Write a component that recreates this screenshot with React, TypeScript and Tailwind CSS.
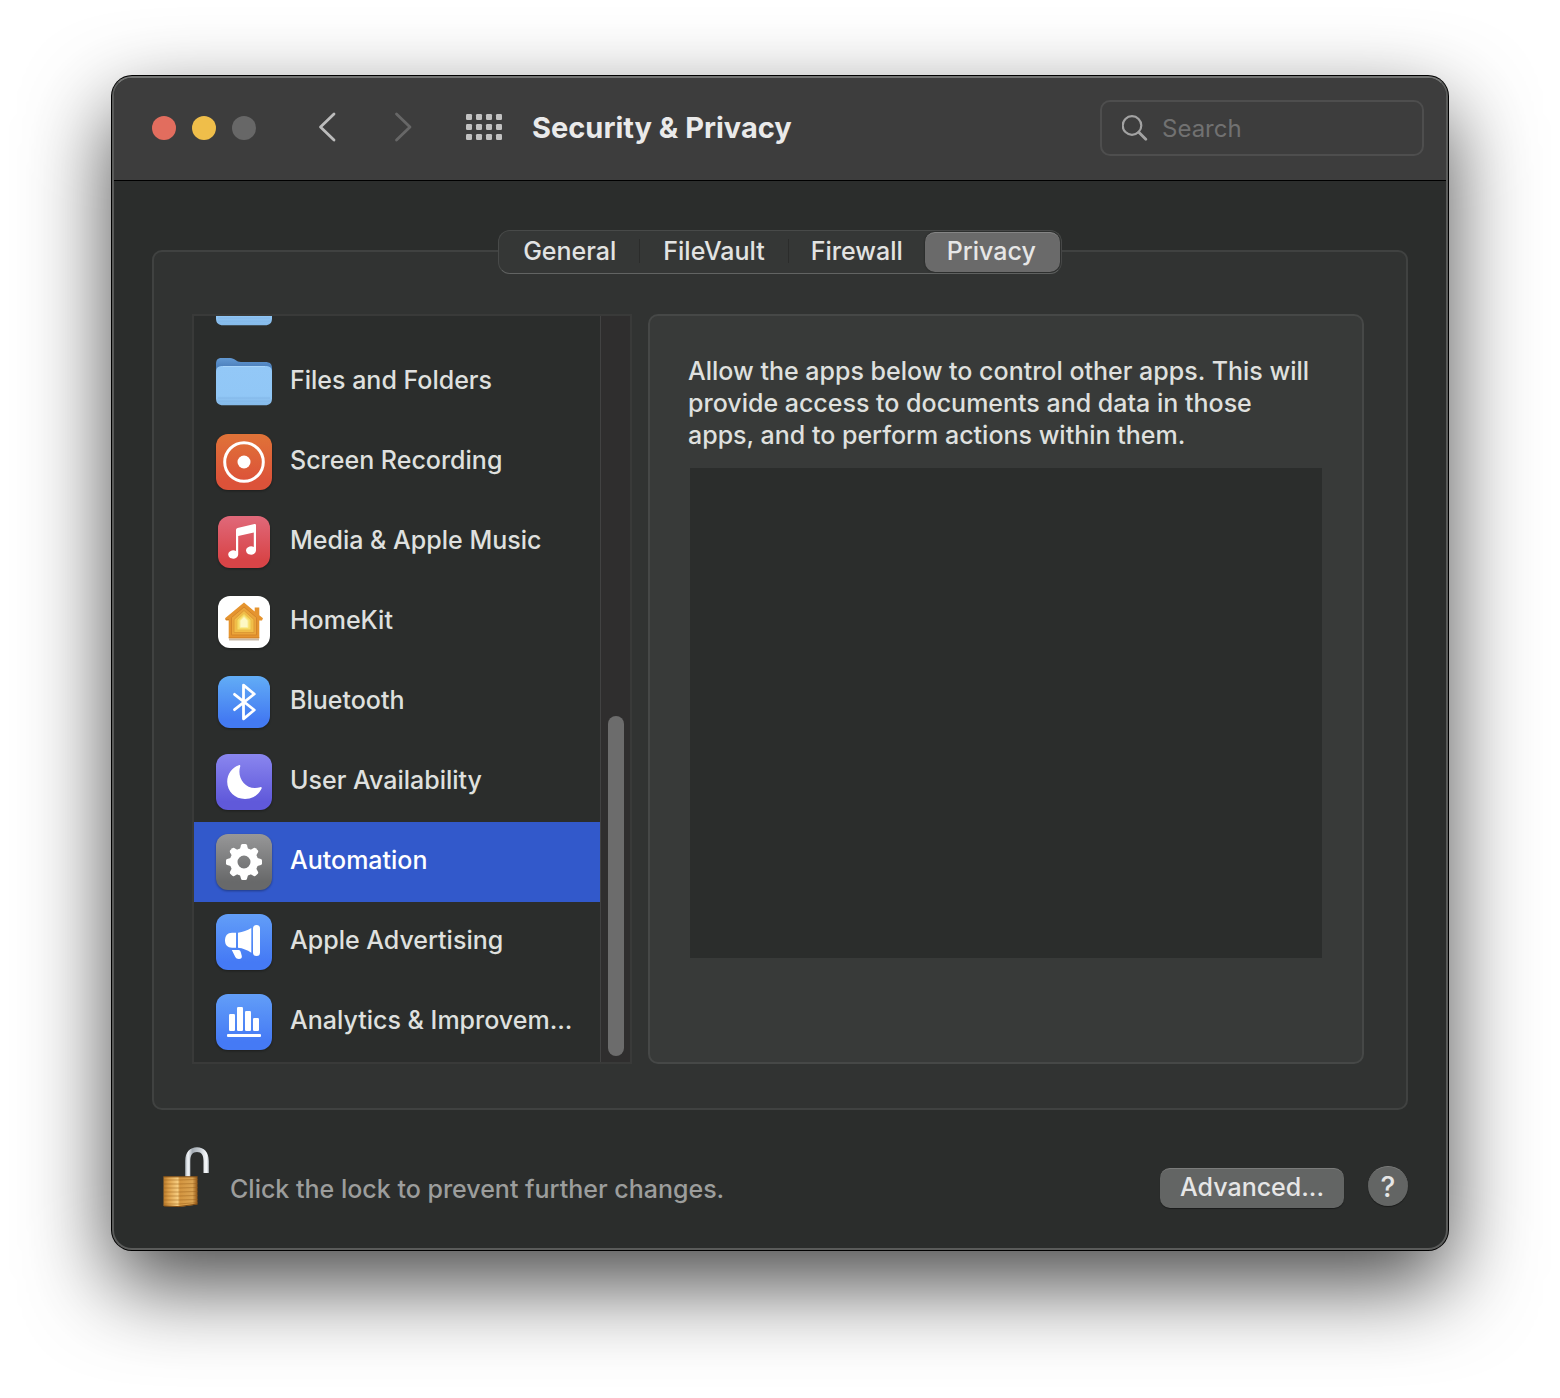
import { type ReactNode, useState } from "react";

type Item = {
  label: string;
  icon: ReactNode;
};

const tabs = ["General", "FileVault", "Firewall", "Privacy"];

function Tile({
  id,
  from,
  to,
  inset = 0,
  children,
}: {
  id: string;
  from: string;
  to: string;
  inset?: number;
  children: ReactNode;
}) {
  return (
    <svg
      viewBox="0 0 56 56"
      className="size-14 shrink-0 overflow-visible drop-shadow-[0_1px_1px_rgba(0,0,0,0.35)]"
      aria-hidden="true"
    >
      <defs>
        <linearGradient id={id} x1="0" y1="0" x2="0" y2="1">
          <stop offset="0" stopColor={from} />
          <stop offset="0.85" stopColor={to} />
        </linearGradient>
      </defs>
      <rect
        x={inset}
        y={inset}
        width={56 - inset * 2}
        height={56 - inset * 2}
        rx="12"
        fill={`url(#${id})`}
      />
      {children}
    </svg>
  );
}

function FolderIcon() {
  return (
    <svg viewBox="0 0 56 56" className="size-14 shrink-0" aria-hidden="true">
      <defs>
        <linearGradient id="folder-back" x1="0" y1="0" x2="0" y2="1">
          <stop offset="0" stopColor="#6399d3" />
          <stop offset="0.3" stopColor="#4f83bf" />
        </linearGradient>
        <linearGradient id="folder-front" x1="0" y1="0" x2="0" y2="1">
          <stop offset="0" stopColor="#93c8f7" />
          <stop offset="0.75" stopColor="#91c7f6" />
          <stop offset="1" stopColor="#84b8e8" />
        </linearGradient>
      </defs>
      <path
        d="M0 10C0 5.500 2 4 6 4H14C19 4 20 8 25 8H49C54 8 56 10 56 14V30H0Z"
        fill="url(#folder-back)"
      />
      <path
        d="M0 18C0 13.500 2.500 12 7 12H49C53.500 12 56 13.500 56 18V44.500C56 49 53.500 51.300 49 51.300H7C2.500 51.300 0 49 0 44.500Z"
        fill="url(#folder-front)"
      />
      <path d="M7 12.500H49" stroke="#a8d5fb" />
      <path d="M2 44H54M2 47H54" stroke="#7fb3e2" strokeOpacity="0.6" />
    </svg>
  );
}

const items: Item[] = [
  { label: "Files and Folders", icon: <FolderIcon /> },
  {
    label: "Screen Recording",
    icon: (
      <Tile id="screen" from="#e07338" to="#dc5239">
        <circle cx="28" cy="28" r="19.3" fill="none" stroke="#fff" strokeWidth="3" />
        <circle cx="28" cy="28" r="6.5" fill="#fff" />
      </Tile>
    ),
  },
  {
    label: "Media & Apple Music",
    icon: (
      <Tile id="music" from="#e0697a" to="#d84447" inset={2}>
        <path
          d="M20 15.800Q20 14.200 21.500 13.900L38.500 10Q40 9.700 40 11.200V36.500A5 4.200 0 1 1 37.800 33V18.500L22.200 22V40.500A5 4.200 0 1 1 20 37Z"
          fill="#fff"
        />
      </Tile>
    ),
  },
  {
    label: "HomeKit",
    icon: (
      <Tile id="home" from="#ffffff" to="#ffffff" inset={2}>
        <path d="M13 45.500H43" stroke="#c9b8a4" strokeWidth="2" />
        <path
          d="M28 8.600L38.700 17.500V13.500H43.300V21.300L47 24.300L46 26.500H43.300V44.300H12.700V26.500H10L9 24.300Z"
          fill="#e5942f"
        />
        <path
          d="M12.700 43.800H43.300M9.500 25.500H13"
          stroke="#c77724"
          fill="none"
          strokeOpacity="0.7"
        />
        <g strokeLinejoin="round">
          <path d="M28 13L40.500 23.500V41H15.500V23.500Z" fill="#eba53a" stroke="#d4852a" />
          <path d="M28 16.500L38 25.500V38.500H18V25.500Z" fill="#f2bd48" stroke="#dd9a35" />
          <path d="M28 19.500L35 26V36H21V26Z" fill="#f7dc66" stroke="#e9bd4b" />
          <path d="M28 22.500L32 26.500V33.500H24V26.500Z" fill="#fdf8c4" stroke="#f9ec96" />
        </g>
      </Tile>
    ),
  },
  {
    label: "Bluetooth",
    icon: (
      <Tile id="bluetooth" from="#62adf6" to="#437af2" inset={2}>
        <path
          d="M18.500 20.300L38.300 36L27.500 44.800V11.200L38.300 20L18.500 35.700"
          fill="none"
          stroke="#fff"
          strokeWidth="2.8"
          strokeLinecap="round"
          strokeLinejoin="round"
        />
      </Tile>
    ),
  },
  {
    label: "User Availability",
    icon: (
      <Tile id="moon" from="#8a86ef" to="#6059da">
        <path
          d="M22.800 11.200C24 10.800 24.600 11.500 24.200 12.600C20.500 24 30 37.500 44.300 33.200C45.500 32.900 46 33.500 45.600 34.500C42.500 41 36.500 45 29 45C19 45 11.200 37.500 11.200 27.800C11.200 20 16 13.500 22.800 11.200Z"
          fill="#fff"
        />
      </Tile>
    ),
  },
  {
    label: "Automation",
    icon: (
      <Tile id="gear" from="#979798" to="#68696a">
        <circle cx="28" cy="28" r="10.3" fill="none" stroke="#fff" strokeWidth="7.6" />
        {[0, 45, 90, 135, 180, 225, 270, 315].map((angle) => (
          <path
            key={angle}
            d="M23.800 15.500L25 11.200Q25.400 10 26.500 10H29.500Q30.600 10 31 11.200L32.200 15.500Z"
            transform={`rotate(${angle} 28 28)`}
            fill="#fff"
          />
        ))}
      </Tile>
    ),
  },
  {
    label: "Apple Advertising",
    icon: (
      <Tile id="ads" from="#629ef8" to="#457af5">
        <g fill="#fff">
          <path d="M16 18.700H20V33.800H16C11.500 33.800 9 31 9 26.300S11.500 18.700 16 18.700Z" />
          <path d="M22 18.700C27 18.200 31 16.500 35.300 14V38.700C31 36 27 34.300 22 33.800Z" />
          <rect x="37" y="11" width="7" height="31" rx="3.5" />
          <path d="M15.800 36H22.500C24 36 24.500 37 25 39L25.800 42C26.200 44 25 45 23 45C21 45 20 44.300 19.300 43Z" />
        </g>
      </Tile>
    ),
  },
  {
    label: "Analytics & Improvem...",
    icon: (
      <Tile id="analytics" from="#629ef8" to="#457af5">
        <g fill="#fff">
          <rect x="13" y="20" width="6" height="17" rx="1.2" />
          <rect x="21" y="13" width="6" height="24" rx="1.2" />
          <rect x="29" y="17" width="6" height="20" rx="1.2" />
          <rect x="37" y="24" width="6" height="13" rx="1.2" />
          <rect x="11" y="40" width="34" height="3" rx="1" />
        </g>
      </Tile>
    ),
  },
];

function LockIcon() {
  return (
    <svg viewBox="0 0 48 62" className="h-[62px] w-12" aria-hidden="true">
      <defs>
        <linearGradient id="brass" x1="0" y1="0" x2="1" y2="0">
          <stop offset="0" stopColor="#b97a2b" />
          <stop offset="0.15" stopColor="#dda04a" />
          <stop offset="0.42" stopColor="#f6cd80" />
          <stop offset="0.48" stopColor="#d39540" />
          <stop offset="0.85" stopColor="#dba452" />
          <stop offset="1" stopColor="#8f5417" />
        </linearGradient>
        <linearGradient id="steel" x1="0" y1="0" x2="1" y2="0">
          <stop offset="0" stopColor="#aab2b9" />
          <stop offset="0.12" stopColor="#f4f7fa" />
          <stop offset="0.3" stopColor="#a3abb3" />
          <stop offset="0.6" stopColor="#c3c9cf" />
          <stop offset="0.9" stopColor="#f7f9fb" />
          <stop offset="1" stopColor="#bcc3c9" />
        </linearGradient>
      </defs>
      <path
        d="M23.200 31V15C23.200 6 28 1.200 35 1.200C42 1.200 46.800 6 46.800 15V27H41.500V15C41.500 9 39.500 6 35 6C30.500 6 28.300 9 28.300 15V31Z"
        fill="url(#steel)"
      />
      <path d="M1.500 30.500H35.500V58.500L17 61L1.500 60Z" fill="url(#brass)" />
      <path
        d="M2 34H17L35.500 33.500M2 38H17L35.500 37.500M2 42H17L35.500 41.500M2 46H17L35.500 45.500M2 50H17L35.500 49.500M2 54H17L35.500 53.500M2 58H17L35.500 56.500"
        stroke="#9a601c"
        strokeOpacity="0.5"
        fill="none"
      />
      <path d="M1.500 30.800H35.500M2 60L17 60.600L35.500 58" stroke="#7c4a14" fill="none" />
    </svg>
  );
}

function TitleBar() {
  return (
    <header className="flex h-[103px] items-center border-b border-black bg-[#3d3d3d] pr-[22px] pb-[2px] pl-[38px]">
      <div className="flex gap-4">
        <button type="button" aria-label="Close" className="size-6 rounded-full bg-[#e26d5e]" />
        <button type="button" aria-label="Minimize" className="size-6 rounded-full bg-[#efbe4a]" />
        <button type="button" aria-label="Zoom" disabled className="size-6 rounded-full bg-[#676767]" />
      </div>
      <nav className="ml-[61px] flex items-center gap-[54px] pb-[2px]">
        <button type="button" aria-label="Back">
          <svg
            viewBox="0 0 22 30"
            className="h-[30px] w-[22px]"
            fill="none"
            stroke="#bcbcbc"
            strokeWidth="2.8"
            strokeLinecap="round"
            strokeLinejoin="round"
          >
            <path d="M17 2L3.500 15L17 28" />
          </svg>
        </button>
        <button type="button" aria-label="Forward" disabled>
          <svg
            viewBox="0 0 22 30"
            className="h-[30px] w-[22px]"
            fill="none"
            stroke="#676767"
            strokeWidth="2.8"
            strokeLinecap="round"
            strokeLinejoin="round"
          >
            <path d="M3.500 2L17 15L3.500 28" />
          </svg>
        </button>
        <button type="button" aria-label="Show all" className="-ml-[3px]">
          <svg viewBox="0 0 36 26" className="h-[26px] w-9" fill="#c2c2c2">
            {[0, 10, 20].map((y) =>
              [0, 10, 20, 30].map((x) => (
                <rect key={`${x}-${y}`} x={x} y={y} width="6" height="6" rx="1.2" />
              )),
            )}
          </svg>
        </button>
      </nav>
      <h1 className="ml-[30px] text-[29px] font-bold text-[#eaeaea]">Security &amp; Privacy</h1>
      <label className="ml-auto flex h-14 w-[324px] items-center gap-[14px] rounded-[10px] border-2 border-[#4e4e4e] px-5">
        <svg
          viewBox="0 0 26 26"
          className="size-[26px] shrink-0"
          fill="none"
          stroke="#a3a3a3"
          strokeLinecap="round"
        >
          <circle cx="10" cy="10.5" r="9.3" strokeWidth="2.2" />
          <path d="M16.800 17.300L23.800 24.300" strokeWidth="2.800" />
        </svg>
        <input
          type="text"
          aria-label="Search"
          placeholder="Search"
          className="w-full min-w-0 bg-transparent pt-[2px] text-[24px] text-[#eaeaea] outline-none placeholder:text-[#717171]"
        />
      </label>
    </header>
  );
}

export default function App() {
  const [tab, setTab] = useState("Privacy");
  const [selected, setSelected] = useState("Automation");

  return (
    <div className="bg-white px-28 pt-[76px] pb-[148px] font-['Inter','Liberation_Sans',sans-serif]">
      <main className="overflow-hidden rounded-[20px] border-2 border-[#5a5b5a] border-t-[#737473] bg-[#2b2d2c] shadow-[0_0_0_1px_#000,0_34px_86px_rgba(0,0,0,0.72)]">
        <TitleBar />
        <div className="px-[38px] pt-[49px] pb-[40px]">
          <div className="relative z-10 flex justify-center">
            <div
              role="tablist"
              className="flex h-11 items-center rounded-[12px] border border-[#484a49] border-b-[#626463] bg-[#353736] p-px"
            >
              {tabs.map((name, i) => (
                <button
                  key={name}
                  type="button"
                  role="tab"
                  aria-selected={tab === name}
                  onClick={() => setTab(name)}
                  className={
                    tab === name
                      ? "flex h-10 items-center rounded-[10px] border-t border-[#858585] bg-[#6a6a6a] pr-6 pb-[3px] pl-[22px] text-[25px] leading-8 font-medium text-[#e6e6e6] shadow-[0_0_2px_rgba(0,0,0,0.5)]"
                      : "flex h-10 items-center pb-[2px] text-[25px] leading-8 font-medium text-[#e2e3e2]"
                  }
                >
                  <span
                    className={
                      tab === name
                        ? "leading-6"
                        : i < 2
                          ? "border-r border-[#2b2c2b] px-[23px] leading-6"
                          : "px-[22px] leading-6"
                    }
                  >
                    {name}
                  </span>
                </button>
              ))}
            </div>
          </div>

          <section className="-mt-6 flex gap-4 rounded-[10px] border-2 border-[#404241] bg-[#313332] pt-[62px] pr-[42px] pb-11 pl-[38px]">
            <div className="flex h-[750px] w-[440px] shrink-0 border-2 border-[#393a39] bg-[#2b2d2c]">
              <ul className="flex min-w-0 flex-1 flex-col justify-end overflow-hidden">
                <li aria-hidden="true" className="flex h-20 shrink-0 items-center pl-[22px]">
                  <FolderIcon />
                </li>
                {items.map((item) => (
                  <li key={item.label} className="shrink-0">
                    <button
                      type="button"
                      onClick={() => setSelected(item.label)}
                      className={
                        selected === item.label
                          ? "flex h-20 w-full items-center gap-[18px] bg-[#3259cb] pl-[22px] text-left text-white"
                          : "flex h-20 w-full items-center gap-[18px] pl-[22px] text-left text-[#dfe0df]"
                      }
                    >
                      {item.icon}
                      <span className="pb-1 text-[25px] leading-8 font-medium whitespace-nowrap">
                        {item.label}
                      </span>
                    </button>
                  </li>
                ))}
              </ul>
              <div className="flex w-[30px] flex-col justify-end border-l border-[#424242] bg-[#2f2e2e] pr-1.5 pb-1.5 pl-[7px]">
                <div className="h-[340px] w-4 rounded-full bg-[#6c6c6c]" />
              </div>
            </div>

            <div className="min-w-0 flex-1 rounded-[10px] border-2 border-[#464847] bg-[#383a39] px-[38px] pt-[39px]">
              <p className="text-[25px] leading-8 font-medium text-[#dfe0df]">
                Allow the apps below to control other apps. This will provide access to documents
                and data in those apps, and to perform actions within them.
              </p>
              <div className="mx-[2px] mt-[17px] h-[490px] bg-[#2b2d2c]" />
            </div>
          </section>

          <footer className="flex items-end pt-9">
            <button type="button" aria-label="Lock" className="ml-[10px]">
              <LockIcon />
            </button>
            <p className="mb-[3px] ml-5 text-[25px] leading-8 font-medium text-[#9c9d9c]">
              Click the lock to prevent further changes.
            </p>
            <button
              type="button"
              className="ml-auto h-10 rounded-[10px] border-t border-[#7b7c7b] bg-[#636564] px-5 pb-1 text-[25px] leading-8 font-medium text-[#e6e6e6] shadow-[0_1px_1px_rgba(0,0,0,0.4)]"
            >
              Advanced...
            </button>
            <button
              type="button"
              aria-label="Help"
              className="mb-[2px] ml-6 size-10 rounded-full border-t border-[#7b7c7b] bg-[#636564] text-[28px] leading-8 font-medium text-[#e6e6e6] shadow-[0_1px_1px_rgba(0,0,0,0.4)]"
            >
              ?
            </button>
          </footer>
        </div>
      </main>
    </div>
  );
}
